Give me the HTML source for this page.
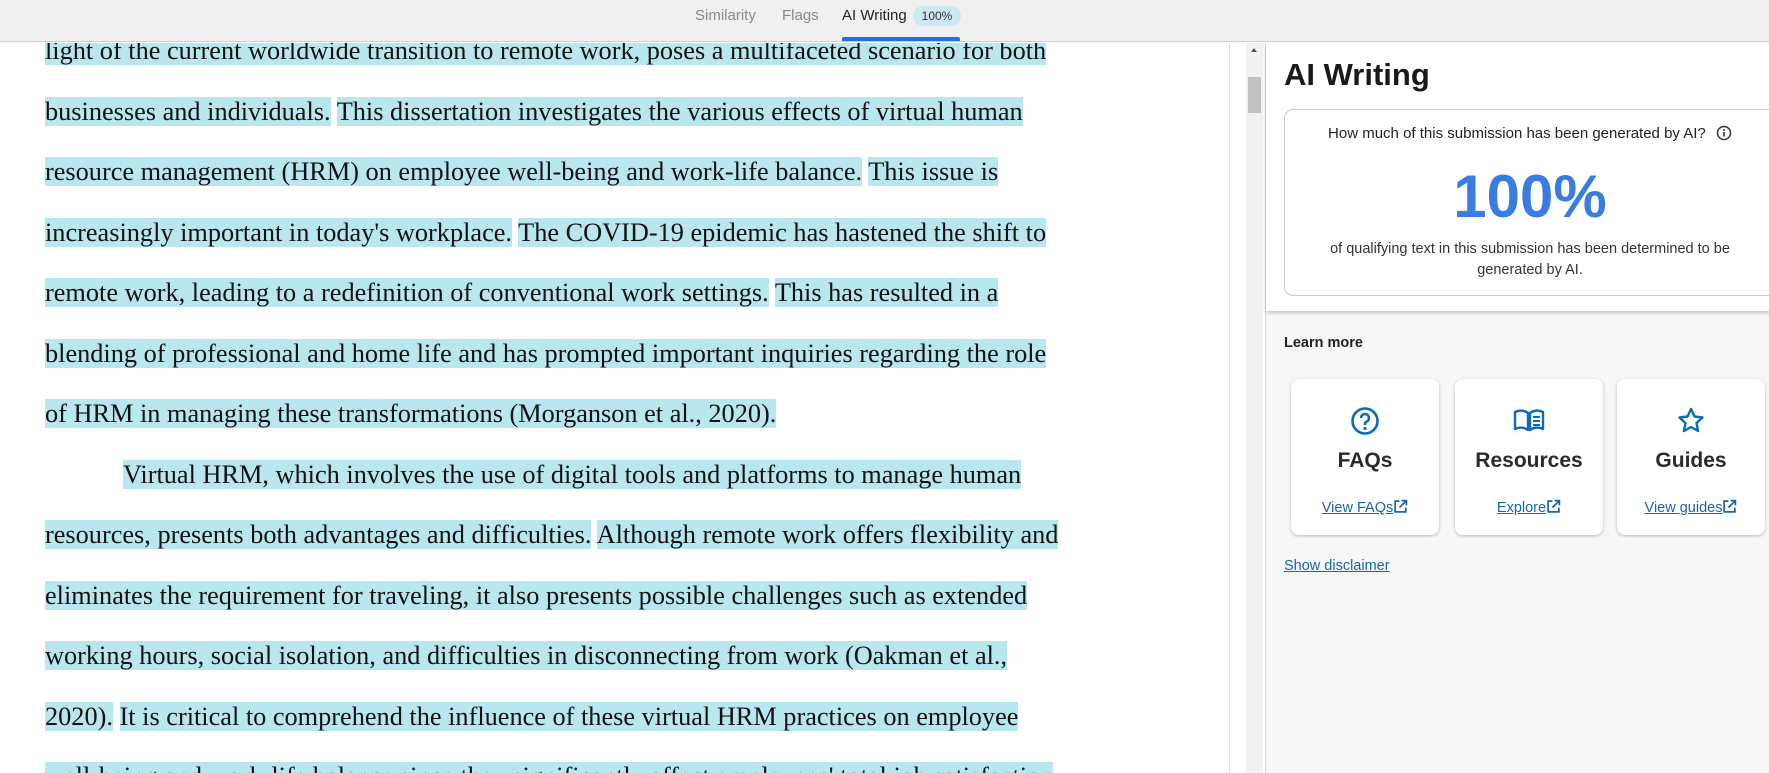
<!DOCTYPE html>
<html><head><meta charset="utf-8"><style>
*{margin:0;padding:0;box-sizing:border-box}
body{width:1769px;height:773px;overflow:hidden;background:#fff;position:relative;font-family:"Liberation Sans",sans-serif}
.bar{position:absolute;left:0;top:0;width:1769px;height:42px;background:#f0f0f0;border-bottom:1px solid #cfcfcf}
.tab{position:absolute;top:6px;font-size:15px;color:#8a8a8a;line-height:20px}
.pill{position:absolute;left:913px;top:6px;width:48px;height:20px;border-radius:10px;background:#cbe9f4;font-size:12px;color:#333;text-align:center;line-height:20px}
.ul{position:absolute;left:842px;top:37px;width:118px;height:4px;background:#1a73e8;border-radius:2px 2px 0 0}
.doc{position:absolute;left:0;top:43px;width:1230px;height:730px;overflow:hidden;border-right:1px solid #ddd}
.txt{position:absolute;left:45px;top:-22px;font-family:"Liberation Serif",serif;font-size:26.3px;line-height:60.5px;white-space:nowrap;color:#111}
.h{background:#b9e7f0}
.sb{position:absolute;left:1246px;top:43px;width:17px;height:730px;background:#f1f1f1}
.panel{position:absolute;left:1265px;top:43px;width:504px;height:730px;background:#f7f7f7;border-left:1px solid #d6d6d6}
.top{position:absolute;left:0;top:0;width:504px;height:268px;background:#fff;box-shadow:0 2px 4px rgba(0,0,0,.2)}
.card{position:absolute;left:18px;top:66px;width:520px;height:187px;border:1px solid #ccc;border-radius:9px}
.lc{position:absolute;top:336px;width:148px;height:156px;background:#fff;border-radius:8px;box-shadow:0 1px 3px rgba(0,0,0,.25);text-align:center}
.lc svg.ic{position:absolute;left:59px;top:27px}
.lc .t{position:absolute;left:0;width:100%;top:70px;font-size:21px;font-weight:bold;color:#2a2a2a}
.lc .l{position:absolute;left:0;width:100%;top:120px;font-size:14.5px;color:#1565b0;text-decoration:underline;white-space:nowrap}
</style></head><body>
<div class="bar">
<div class="tab" style="left:695px">Similarity</div>
<div class="tab" style="left:782px">Flags</div>
<div class="tab" style="left:842px;color:#222">AI Writing</div>
<div class="pill">100%</div>
<div class="ul"></div>
</div>
<div class="doc"><div class="txt">
<span class="h">light of the current worldwide transition to remote work, poses a multifaceted scenario for both</span><br>
<span class="h">businesses and individuals.</span> <span class="h">This dissertation investigates the various effects of virtual human</span><br>
<span class="h">resource management (HRM) on employee well-being and work-life balance.</span> <span class="h">This issue is</span><br>
<span class="h">increasingly important in today's workplace.</span> <span class="h">The COVID-19 epidemic has hastened the shift to</span><br>
<span class="h">remote work, leading to a redefinition of conventional work settings.</span> <span class="h">This has resulted in a</span><br>
<span class="h">blending of professional and home life and has prompted important inquiries regarding the role</span><br>
<span class="h">of HRM in managing these transformations (Morganson et al., 2020).</span><br>
<span style="display:inline-block;width:78px"></span><span class="h">Virtual HRM, which involves the use of digital tools and platforms to manage human</span><br>
<span class="h">resources, presents both advantages and difficulties.</span> <span class="h">Although remote work offers flexibility and</span><br>
<span class="h">eliminates the requirement for traveling, it also presents possible challenges such as extended</span><br>
<span class="h">working hours, social isolation, and difficulties in disconnecting from work (Oakman et al.,</span><br>
<span class="h">2020).</span> <span class="h">It is critical to comprehend the influence of these virtual HRM practices on employee</span><br>
<span class="h">well-being and work-life balance since they significantly affect employees' total job satisfaction</span>
</div></div>
<div class="sb"><div style="position:absolute;left:5px;top:5px;width:0;height:0;border-left:3px solid transparent;border-right:3px solid transparent;border-bottom:4px solid #555"></div><div style="position:absolute;left:2px;top:34px;width:13px;height:36px;background:#c1c1c1"></div></div>
<div class="panel">
<div class="top">
<div style="position:absolute;left:18px;top:14px;font-size:31px;font-weight:bold;color:#1a1a1a">AI Writing</div>
<div class="card"></div>
<div style="position:absolute;left:40px;width:448px;top:82px;text-align:center;font-size:15px;color:#222">How much of this submission has been generated by AI?
<svg width="16" height="16" viewBox="0 0 16 16" style="vertical-align:-3px;margin-left:6px"><circle cx="8" cy="8" r="6.5" fill="none" stroke="#333" stroke-width="1.5"/><rect x="7.2" y="7" width="1.6" height="4.5" fill="#333"/><circle cx="8" cy="5" r="1" fill="#333"/></svg></div>
<div style="position:absolute;left:40px;width:448px;top:122px;text-align:center;font-size:60px;font-weight:bold;color:#3a7de0;line-height:64px">100%</div>
<div style="position:absolute;left:44px;width:440px;top:196px;text-align:center;font-size:14.5px;color:#333;line-height:21px">of qualifying text in this submission has been determined to be generated by AI.</div>
</div>
<div style="position:absolute;left:18px;top:292px;font-size:14.5px;font-weight:bold;color:#222">Learn more</div>
<div class="lc" style="left:25px">
<svg class="ic" width="30" height="30" viewBox="0 0 30 30"><circle cx="15" cy="15" r="12.5" fill="none" stroke="#0b6bb5" stroke-width="2.6"/><path d="M11 12a4 4 0 1 1 5.5 3.7c-1 .5-1.5 1.2-1.5 2.3v1" fill="none" stroke="#0b6bb5" stroke-width="2.6"/><circle cx="15" cy="22.5" r="1.6" fill="#0b6bb5"/></svg>
<div class="t">FAQs</div><div class="l">View FAQs<svg width="15" height="15" viewBox="0 0 14 14" style="vertical-align:-2px"><path d="M6 2H2v10h10V8M8 1.5h4.5V6M12.5 1.5L6 8" fill="none" stroke="#1565b0" stroke-width="1.6"/></svg></div></div>
<div class="lc" style="left:189px">
<svg class="ic" width="32" height="30" viewBox="0 0 32 30" style="left:58px"><path d="M2 6c4-2 9-2 13 1v17c-4-3-9-3-13-1z M30 6c-4-2-9-2-13 1v17c4-3 9-3 13-1z" fill="none" stroke="#0b6bb5" stroke-width="2.4" stroke-linejoin="round"/><path d="M20 11h7M20 15h7M20 19h7" stroke="#0b6bb5" stroke-width="2"/></svg>
<div class="t">Resources</div><div class="l">Explore<svg width="15" height="15" viewBox="0 0 14 14" style="vertical-align:-2px"><path d="M6 2H2v10h10V8M8 1.5h4.5V6M12.5 1.5L6 8" fill="none" stroke="#1565b0" stroke-width="1.6"/></svg></div></div>
<div class="lc" style="left:351px">
<svg class="ic" width="30" height="30" viewBox="0 0 30 30"><path d="M15 3l3.5 7.5 8 1-6 5.5 1.6 8L15 21l-7.1 4 1.6-8-6-5.5 8-1z" fill="none" stroke="#0b6bb5" stroke-width="2.4" stroke-linejoin="round"/></svg>
<div class="t">Guides</div><div class="l">View guides<svg width="15" height="15" viewBox="0 0 14 14" style="vertical-align:-2px"><path d="M6 2H2v10h10V8M8 1.5h4.5V6M12.5 1.5L6 8" fill="none" stroke="#1565b0" stroke-width="1.6"/></svg></div></div>
<div style="position:absolute;left:18px;top:515px;font-size:14.5px;color:#1565b0;text-decoration:underline">Show disclaimer</div>
</div>
</body></html>
